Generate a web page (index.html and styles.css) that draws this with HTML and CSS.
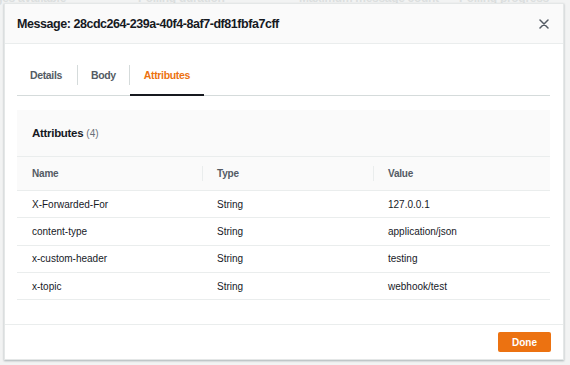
FILE: index.html
```html
<!DOCTYPE html>
<html lang="en">
<head>
<meta charset="utf-8">
<title>Message attributes</title>
<link rel="stylesheet" href="styles.css">
</head>
<body>
<div class="page">
  <div class="page-labels">
    <span class="pl pl-1">Messages available</span>
    <span class="pl pl-2">Polling duration</span>
    <span class="pl pl-3">Maximum message count</span>
    <span class="pl pl-4">Polling progress</span>
  </div>
</div>

<div class="modal" role="dialog" aria-label="Message details">
  <div class="modal-header">
    <h2 class="modal-title">Message: 28cdc264-239a-40f4-8af7-df81fbfa7cff</h2>
    <button class="close-btn" aria-label="Close">
      <svg width="10" height="10" viewBox="0 0 10 10"><path d="M1 1 L9 9 M9 1 L1 9" stroke="#545b64" stroke-width="1.5" stroke-linecap="round" fill="none"/></svg>
    </button>
  </div>
  <div class="modal-body">
    <div class="tabs">
      <div class="tab tab-first">Details</div>
      <div class="tab">Body</div>
      <div class="tab tab-last active">Attributes</div>
    </div>
    <div class="container">
      <div class="container-header">
        <span class="ch-title">Attributes</span> <span class="ch-count">(4)</span>
      </div>
      <div class="table">
        <div class="trow thead">
          <div class="cell">Name</div>
          <div class="cell div">Type</div>
          <div class="cell div">Value</div>
        </div>
        <div class="trow">
          <div class="cell">X-Forwarded-For</div>
          <div class="cell">String</div>
          <div class="cell">127.0.0.1</div>
        </div>
        <div class="trow">
          <div class="cell">content-type</div>
          <div class="cell">String</div>
          <div class="cell">application/json</div>
        </div>
        <div class="trow">
          <div class="cell">x-custom-header</div>
          <div class="cell">String</div>
          <div class="cell">testing</div>
        </div>
        <div class="trow">
          <div class="cell">x-topic</div>
          <div class="cell">String</div>
          <div class="cell">webhook/test</div>
        </div>
      </div>
    </div>
  </div>
  <div class="modal-footer">
    <button class="done-btn">Done</button>
  </div>
</div>
</body>
</html>
```

FILE: styles.css
```css
* { box-sizing: border-box; }

html, body {
  margin: 0;
  padding: 0;
  background: #f2f3f3;
  width: 570px;
  height: 365px;
  overflow: hidden;
  font-family: "Liberation Sans", Arial, sans-serif;
  color: #16191f;
}

.page {
  position: relative;
  height: 365px;
}

.page-labels {
  display: flex;
  margin-top: -9px;
  height: 14px;
  font-size: 12px;
  font-weight: bold;
  letter-spacing: -0.3px;
  color: #dcdfdf;
  white-space: nowrap;
}

.pl-1 { margin-left: -40px; width: 178px; }
.pl-2 { width: 161px; }
.pl-3 { width: 160px; }

.modal {
  position: absolute;
  top: 3px;
  left: 4px;
  width: 560px;
  background: #ffffff;
  border: 1px solid #e4e7e7;
  box-shadow: 0 1px 2px rgba(0, 28, 36, 0.3);
}

.modal-header {
  height: 40px;
  background: #fafafa;
  border-bottom: 1px solid #eaeded;
  display: flex;
  align-items: center;
  justify-content: space-between;
  padding: 0 13px 0 12px;
}

.modal-title {
  margin: 0;
  font-size: 12.5px;
  font-weight: bold;
  letter-spacing: -0.45px;
  color: #16191f;
}

.close-btn {
  border: 0;
  background: transparent;
  padding: 0;
  width: 12px;
  height: 12px;
  display: flex;
  align-items: center;
  justify-content: center;
  cursor: pointer;
}

.modal-body {
  padding: 11px 13px 24px 12px;
}

.tabs {
  display: flex;
  border-bottom: 1px solid #d5dbdb;
  height: 41px;
}

.tab {
  position: relative;
  height: 40px;
  padding: 0 13px 0 14px;
  display: flex;
  align-items: center;
  font-size: 10.5px;
  font-weight: bold;
  letter-spacing: -0.35px;
  color: #545b64;
}

.tab.tab-first { padding-left: 13px; padding-right: 15px; }
.tab.tab-last { padding-left: 15px; padding-right: 14px; }

.tab + .tab::before {
  content: "";
  position: absolute;
  left: 0;
  top: 10px;
  height: 20px;
  width: 1px;
  background: #d5dbdb;
}

.tab.active {
  color: #ec7211;
}

.tab.active::after {
  content: "";
  position: absolute;
  left: 1px;
  right: 0;
  bottom: -1px;
  height: 2px;
  background: #16191f;
}

.container {
  margin-top: 14px;
  background: #ffffff;
}

.container-header {
  height: 47px;
  background: #fafafa;
  border-bottom: 1px solid #eaeded;
  padding: 0 15px;
  display: flex;
  align-items: center;
  gap: 3px;
}

.ch-title {
  font-size: 11.5px;
  font-weight: bold;
  letter-spacing: -0.3px;
  color: #16191f;
}

.ch-count {
  font-size: 10px;
  color: #687078;
}

.trow {
  display: grid;
  grid-template-columns: 185px 171px 1fr;
  height: 27.3px;
  border-bottom: 1px solid #eaeded;
  align-items: center;
}

.trow.thead {
  height: 34px;
  background: #fafafa;
}

.cell {
  position: relative;
  padding-left: 15px;
  font-size: 10px;
  color: #16191f;
  white-space: nowrap;
  height: 100%;
  display: flex;
  align-items: center;
}

.thead .cell {
  font-size: 10px;
  font-weight: bold;
  letter-spacing: -0.2px;
  color: #545b64;
}

.cell.div::before {
  content: "";
  position: absolute;
  left: 0;
  top: 9px;
  bottom: 9px;
  width: 1px;
  background: #eaeded;
}

.modal-footer {
  border-top: 1px solid #eaeded;
  padding: 7px 12px 7px 13px;
  display: flex;
  justify-content: flex-end;
}

.done-btn {
  width: 53px;
  height: 20px;
  border: 0;
  border-radius: 2px;
  background: #ec7211;
  color: #ffffff;
  font-family: inherit;
  font-size: 10px;
  font-weight: bold;
  padding: 0;
  cursor: pointer;
}
```
